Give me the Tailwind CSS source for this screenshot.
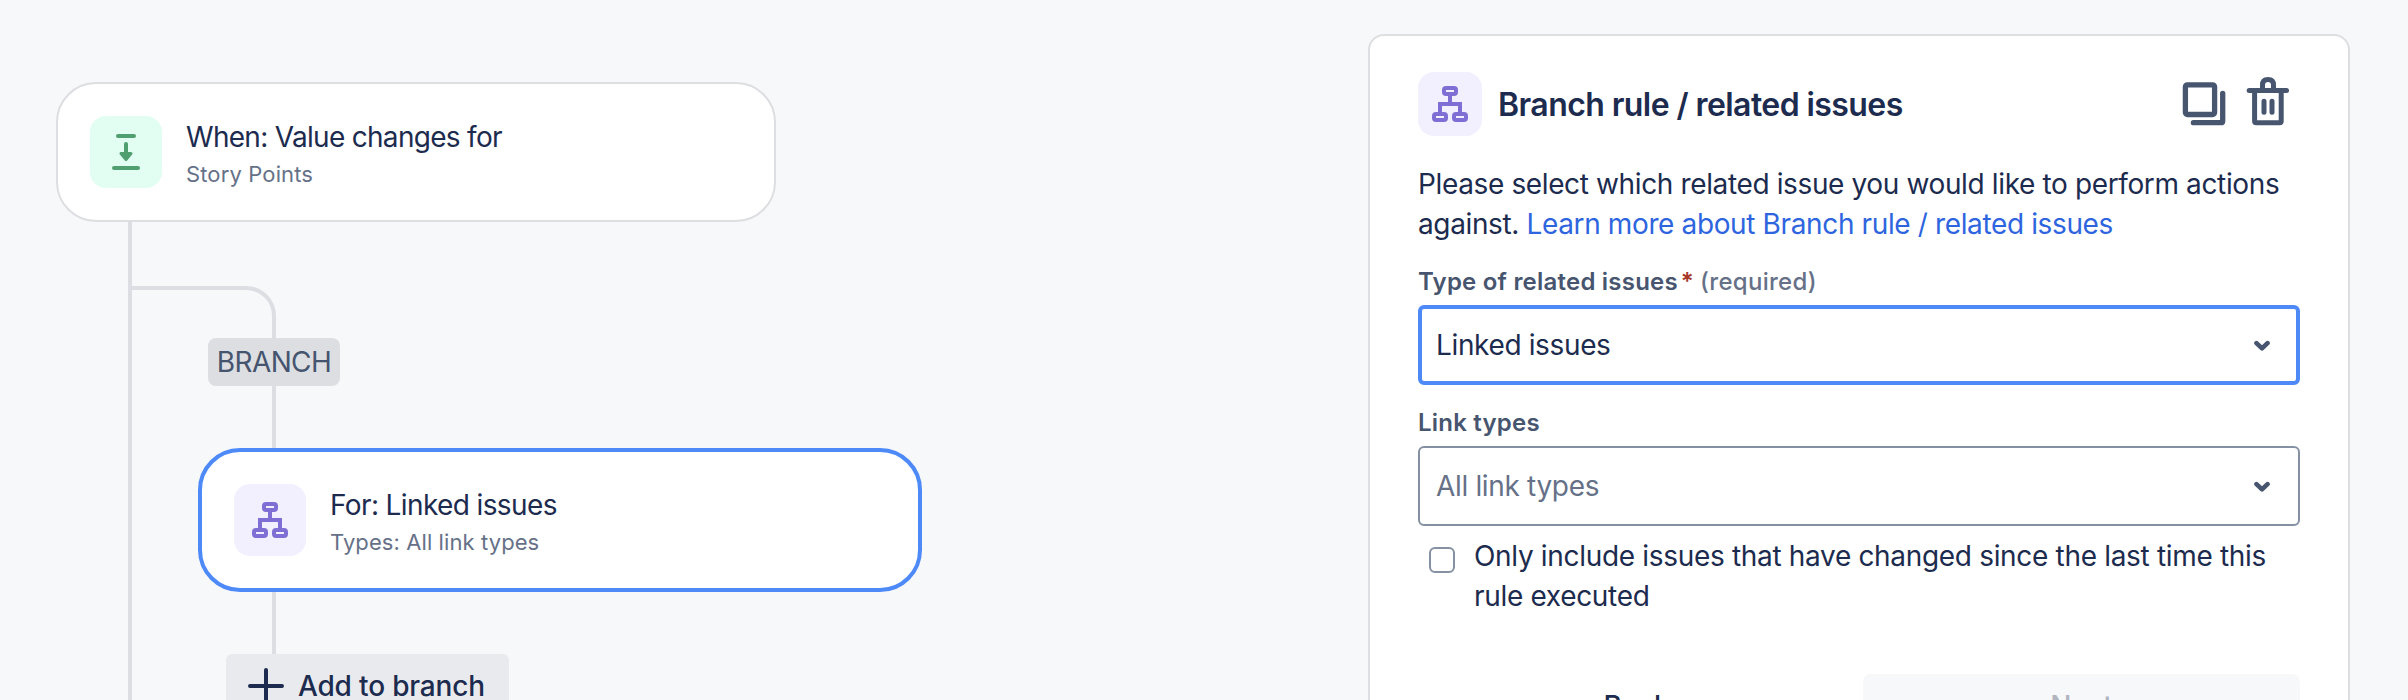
<!DOCTYPE html>
<html lang="en">
<head>
  <meta charset="UTF-8" />
  <meta name="viewport" content="width=device-width, initial-scale=1.0" />
  <title>Automation rule</title>
  <script src="https://cdn.jsdelivr.net/npm/@tailwindcss/browser@4"></script>
  <style>
    body {
      font-family: 'Inter', 'Liberation Sans', sans-serif;
    }
  </style>
</head>
<body class="w-[2408px] h-[700px] overflow-hidden bg-[#f7f8fa] text-[#1c2b4e] text-[28px] leading-10 flex">

  <!-- Rule canvas -->
  <main class="relative w-[1368px] h-[700px] shrink-0 overflow-hidden">
    <!-- Connectors -->
    <svg class="absolute inset-0" width="1368" height="700" fill="none" stroke="#dddee3" stroke-width="4">
      <path d="M130 222V700" />
      <path d="M132 288H246A28 28 0 0 1 274 316V654" />
    </svg>

    <section class="absolute left-[56px] top-[82px] w-[720px] h-[140px] flex items-start gap-6 rounded-[40px] border-2 border-[#dddee1] bg-white p-8">
      <div class="size-[72px] shrink-0 flex items-center justify-center rounded-2xl bg-[#e2fef2]">
        <svg width="36" height="36" viewBox="0 0 36 36" fill="none" stroke="#4f9f71" stroke-width="4" stroke-linecap="round">
          <path d="M10 2H26M6 34H30M18 10V20" />
          <path d="M13 19.5H23L18 25.5Z" fill="#4f9f71" stroke-width="3" stroke-linejoin="round" />
        </svg>
      </div>
      <div class="mt-px whitespace-nowrap">
        <h2 class="tracking-[-0.025em]">When: Value changes for</h2>
        <p class="text-[22px] leading-[34px] tracking-[0.006em] text-[#667188]">Story Points</p>
      </div>
    </section>

    <span class="absolute left-[208px] top-[338px] w-[132px] h-12 rounded-lg bg-[#dddee1] text-center leading-[48px] tracking-[-0.022em] text-[#45546f]">BRANCH</span>

    <section class="absolute left-[198px] top-[448px] w-[724px] h-[144px] flex items-start gap-6 rounded-[42px] border-4 border-[#4d8af8] bg-white p-8">
      <div class="size-[72px] shrink-0 flex items-center justify-center rounded-2xl bg-[#f2effe]">
        <svg width="36" height="36" viewBox="0 0 36 36" fill="none" stroke="#7f6fd4" stroke-width="4">
          <rect x="12" y="2" width="12" height="6" rx="2" />
          <rect x="2" y="28" width="12" height="6" rx="2" />
          <rect x="22" y="28" width="12" height="6" rx="2" />
          <path d="M18 9V18M8 27V18H28V27" />
        </svg>
      </div>
      <div class="mt-px whitespace-nowrap">
        <h2 class="tracking-[-0.022em]">For: Linked issues</h2>
        <p class="text-[22px] leading-[34px] tracking-[0.004em] text-[#667188]">Types: All link types</p>
      </div>
    </section>

    <button class="absolute left-[226px] top-[654px] w-[283px] h-16 flex items-center gap-[14px] rounded-md bg-[#e9eaed] pl-[22px] font-medium tracking-[-0.006em] whitespace-nowrap">
      <svg width="36" height="36" viewBox="0 0 36 36" fill="none" stroke="#1c2b4e" stroke-width="4" stroke-linecap="round">
        <path d="M18 2V34M2 18H34" />
      </svg>
      Add to branch
    </button>
  </main>

  <!-- Component settings -->
  <aside class="mt-[34px] w-[982px] h-[760px] shrink-0 rounded-2xl border-2 border-[#dddee1] bg-white px-12 pt-9">
    <header class="flex items-center h-16">
      <div class="size-16 flex items-center justify-center rounded-2xl bg-[#f2effe]">
        <svg width="36" height="36" viewBox="0 0 36 36" fill="none" stroke="#7f6fd4" stroke-width="4">
          <rect x="12" y="2" width="12" height="6" rx="2" />
          <rect x="2" y="28" width="12" height="6" rx="2" />
          <rect x="22" y="28" width="12" height="6" rx="2" />
          <path d="M18 9V18M8 27V18H28V27" />
        </svg>
      </div>
      <h1 class="ml-4 mt-0.5 flex-1 text-[32px] font-semibold tracking-[-0.018em]">Branch rule / related issues</h1>
      <div class="mr-2 flex gap-[15px]">
        <svg width="48" height="48" viewBox="0 0 48 48" fill="none" stroke="#47556f" stroke-width="5.3" stroke-linecap="round" stroke-linejoin="round">
          <rect x="4.4" y="4.8" width="29.2" height="29.7" rx="2" />
          <path d="M41.7 13.3V41.2Q41.7 42.7 40.2 42.7H12.4" />
        </svg>
        <svg class="overflow-visible" width="48" height="48" viewBox="0 0 48 48" fill="none" stroke="#47556f" stroke-width="5" stroke-linecap="round" stroke-linejoin="round">
          <path d="M5.2 10.4H42.5" />
          <path d="M10.6 11V41.2Q10.6 42.8 12.2 42.8H35.6Q37.2 42.8 37.2 41.2V11" />
          <path d="M18.5 10V5Q18.5 -.5 24 -.5T29.5 5V10" />
          <path d="M20 21.3V32.2M28 21.3V32.2" />
        </svg>
      </div>
    </header>

    <p class="mt-7 whitespace-nowrap tracking-[-0.0132em]">Please select which related issue you would like to perform actions<br />against. <a class="text-[#2e65df]">Learn more about Branch rule / related issues</a></p>

    <label class="mt-[22px] flex text-2xl leading-8 font-semibold tracking-[0.009em] text-[#47556f]">
      Type of related issues<span class="ml-[3px] text-[#a6382a]">*</span><span class="ml-[6px] font-medium tracking-[0.012em] text-[#667188]">(required)</span>
    </label>
    <div class="mt-[7px] h-20 flex items-center justify-between rounded-md border-4 border-[#4d8af8] pl-[14px] pr-[26px]">
      <span class="tracking-[-0.013em]">Linked issues</span>
      <svg width="16" height="12" viewBox="0 0 16 12" fill="none" stroke="#47556f" stroke-width="4.6" stroke-linecap="round" stroke-linejoin="round">
        <path d="M2.5 4.2L8 9.4L13.5 4.2" />
      </svg>
    </div>

    <label class="mt-[22px] block text-2xl leading-8 font-semibold tracking-[0.009em] text-[#47556f]">Link types</label>
    <div class="mt-[7px] h-20 flex items-center justify-between rounded-md border-2 border-[#8590a2] pl-4 pr-7">
      <span class="tracking-[-0.012em] text-[#667188]">All link types</span>
      <svg width="16" height="12" viewBox="0 0 16 12" fill="none" stroke="#47556f" stroke-width="4.6" stroke-linecap="round" stroke-linejoin="round">
        <path d="M2.5 4.2L8 9.4L13.5 4.2" />
      </svg>
    </div>

    <div class="mt-[10px] flex items-start gap-[19px] pl-[11px]">
      <span class="mt-[11px] size-[26px] shrink-0 rounded-md border-2 border-[#8590a2]"></span>
      <p class="whitespace-nowrap tracking-[-0.0115em]">Only include issues that have changed since the last time this<br />rule executed</p>
    </div>

    <div class="mt-[58px] flex gap-2 font-medium">
      <button class="h-16 flex-1">Back</button>
      <button class="h-16 flex-1 rounded-lg bg-[#f7f8f9] text-[#b0b5c0]">Next</button>
    </div>
  </aside>

</body>
</html>
